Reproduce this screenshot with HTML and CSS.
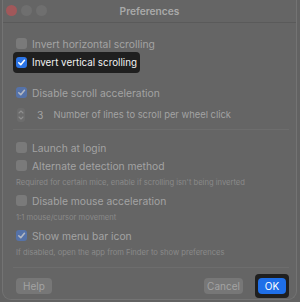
FILE: index.html
```html
<!DOCTYPE html>
<html>
<head>
<meta charset="utf-8">
<link rel="stylesheet" href="styles.css">
</head>
<body>
<div class="window">
  <div class="titlebar">
    <div class="lights">
      <span class="light red"></span>
      <span class="light"></span>
      <span class="light"></span>
    </div>
    <div class="title">Preferences</div>
  </div>
  <div class="content">
    <div class="section">
      <div class="row"><span class="cb"></span><span>Invert horizontal scrolling</span></div>
      <div class="row focus"><span class="cb on bright"><svg viewBox="0 0 12 12"><path d="M3 6.3 L5.2 8.5 L9.2 3.6" fill="none" stroke="#fff" stroke-width="1.7" stroke-linecap="round" stroke-linejoin="round"/></svg></span><span>Invert vertical scrolling</span></div>
    </div>
    <div class="section sec2">
      <div class="row"><span class="cb on"><svg viewBox="0 0 12 12"><path d="M3 6.3 L5.2 8.5 L9.2 3.6" fill="none" stroke="#b4b8c2" stroke-width="1.7" stroke-linecap="round" stroke-linejoin="round"/></svg></span><span>Disable scroll acceleration</span></div>
      <div class="row stepper-row">
        <span class="stepper"><svg viewBox="0 0 8 14"><path d="M2 5 L4 3 L6 5 M2 9 L4 11 L6 9" fill="none" stroke="#8f8f8f" stroke-width="1.1" stroke-linecap="round" stroke-linejoin="round"/></svg></span>
        <span class="num">3</span>
        <span>Number of lines to scroll per wheel click</span>
      </div>
    </div>
    <div class="section sec3">
      <div class="row"><span class="cb"></span><span>Launch at login</span></div>
      <div class="row"><span class="cb"></span><span>Alternate detection method</span></div>
      <div class="hint">Required for certain mice, enable if scrolling isn't being inverted</div>
      <div class="row"><span class="cb"></span><span>Disable mouse acceleration</span></div>
      <div class="hint">1:1 mouse/cursor movement</div>
      <div class="row"><span class="cb on"><svg viewBox="0 0 12 12"><path d="M3 6.3 L5.2 8.5 L9.2 3.6" fill="none" stroke="#b4b8c2" stroke-width="1.7" stroke-linecap="round" stroke-linejoin="round"/></svg></span><span>Show menu bar icon</span></div>
      <div class="hint">If disabled, open the app from Finder to show preferences</div>
    </div>
    <div class="buttons">
      <span class="btn help">Help</span>
      <span class="spacer"></span>
      <span class="btn cancel">Cancel</span>
      <span class="ok-wrap"><span class="btn ok">OK</span></span>
    </div>
  </div>
</div>
</body>
</html>
```
FILE: styles.css
```css
html, body {
  margin: 0;
  padding: 0;
  background: #626262;
  width: 300px;
  height: 302px;
  overflow: hidden;
  font-family: "Inter", "Liberation Sans", sans-serif;
}
.window {
  margin: 0 3px 0 2px;
  height: 300px;
  border: 1px solid #737373;
  border-top: none;
  border-radius: 0 0 9px 9px;
  background: #656565;
  box-sizing: border-box;
  display: flex;
  flex-direction: column;
}
.titlebar {
  height: 23px;
  border-bottom: 1px solid #5a5a5a;
  display: flex;
  align-items: center;
  position: relative;
  box-sizing: border-box;
}
.lights {
  display: flex;
  gap: 4px;
  padding-left: 3px;
  padding-bottom: 1px;
}
.light {
  width: 11px;
  height: 11px;
  border-radius: 50%;
  background: #6f6f6f;
}
.light.red { background: #a1585a; }
.title {
  position: absolute;
  left: 0; right: 0;
  text-align: center;
  color: #a9a9a9;
  font-size: 10.2px;
  font-weight: 600;
  top: 5px;
}
.content {
  flex: 1;
  display: flex;
  flex-direction: column;
  padding: 0 7px 0 10px;
}
.section {
  display: flex;
  flex-direction: column;
}
.section:first-child { padding-top: 12px; }
.row {
  display: flex;
  align-items: center;
  gap: 5px;
  height: 17px;
  padding: 0 3px;
  color: #a3a3a3;
  font-size: 10.3px;
}
.row.focus {
  background: #1f1f1f;
  color: #f2f2f2;
  border-radius: 4px;
  height: 21px;
  align-self: flex-start;
  padding-right: 3px;
  font-size: 9.8px;
}
.cb {
  width: 11px;
  height: 11px;
  border-radius: 3px;
  background: #7a7a7a;
  box-sizing: border-box;
  display: inline-flex;
  flex-shrink: 0;
}
.cb svg { width: 11px; height: 11px; }
.cb.on { background: #5572a8; }
.cb.on.bright { background: #2b74e6; }
.sec2 {
  margin-top: 11px;
  gap: 5px;
  padding-bottom: 6px;
  border-bottom: 1px solid #6d6d6d;
}
.stepper-row { gap: 0; }
.stepper {
  width: 8px;
  height: 14px;
  border-radius: 3px;
  background: #6c6c6c;
  display: inline-flex;
  margin-left: 1px;
}
.stepper svg { width: 8px; height: 14px; }
.num { margin-left: 12px; margin-right: 10px; }
.stepper-row span:last-child { font-size: 9.4px; }
.sec3 {
  padding-top: 9px;
  gap: 1px;
  padding-bottom: 6px;
  border-bottom: 1px solid #6d6d6d;
}
.hint {
  font-size: 7.6px;
  color: #8a8a8a;
  height: 16px;
  line-height: 16px;
  padding-left: 3px;
  white-space: nowrap;
}
.buttons {
  display: flex;
  align-items: center;
  padding: 6px 0 0 3px;
  gap: 12px;
}
.spacer { flex: 1; }
.btn {
  font-size: 10px;
  color: #a3a3a3;
  background: #777777;
  border-radius: 4px;
  height: 16px;
  line-height: 16px;
  text-align: center;
  box-sizing: border-box;
}
.help { width: 36px; }
.cancel { width: 39px; }
.ok-wrap {
  background: #1f1f1f;
  border-radius: 4px;
  padding: 4px 3px;
  display: inline-flex;
}
.btn.ok {
  background: #1f6fe8;
  color: #fff;
  width: 28px;
}
```
